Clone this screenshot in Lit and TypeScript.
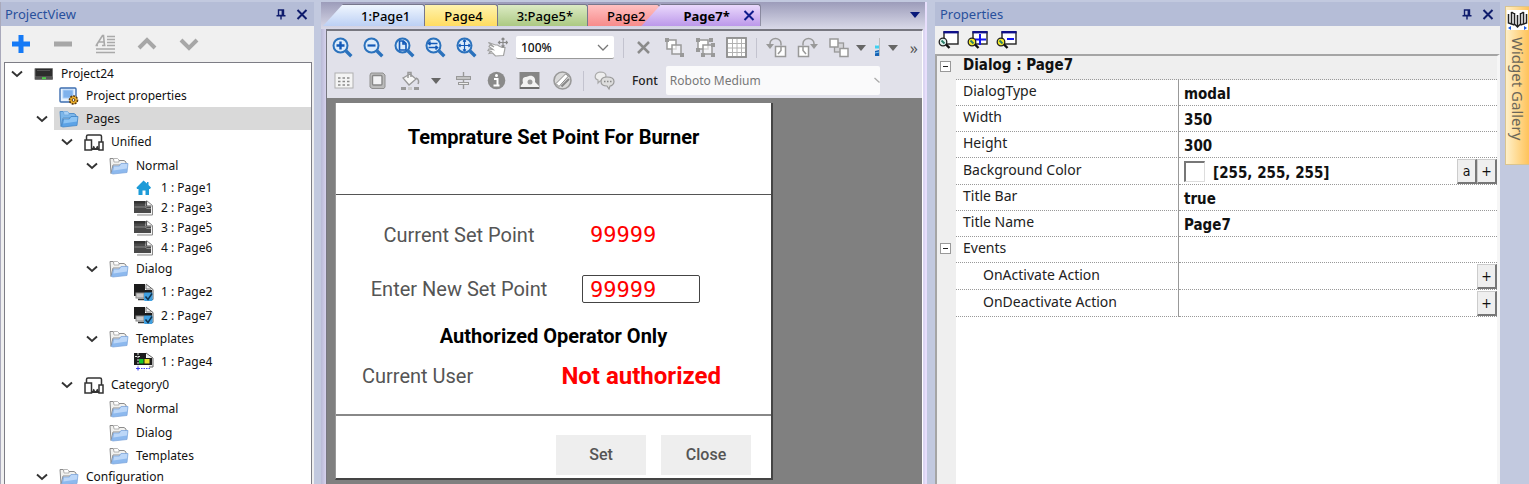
import { LitElement, html, css, svg, nothing, TemplateResult } from "lit";
import { customElement } from "lit/decorators.js";
import { classMap } from "lit/directives/class-map.js";

const icon = (w: number, h: number, body: unknown) =>
  html`<svg width=${w} height=${h} viewBox="0 0 ${w} ${h}" aria-hidden="true">${body}</svg>`;

const chevronDown = () =>
  icon(12, 8, svg`<path d="M1 1.500l5 4.500 5-4.500" fill="none" stroke="#333" stroke-width="1.900"/>`);

const triangle = (color: string) => icon(10, 6, svg`<path d="M0 0h10l-5 6z" fill=${color}/>`);

const pin = () =>
  icon(10, 11, svg`<path d="M2.500 1h5v5.500h-5zM6.300 1v5.500M0.500 6.800h9M5 7v3.500" fill="none" stroke="#0f1c6c" stroke-width="1.400"/>`);

const cross = (color: string) =>
  icon(12, 11, svg`<path d="M1.500 1l9 9M10.500 1l-9 9" fill="none" stroke=${color} stroke-width="2"/>`);

const deviceIcon = () => icon(20, 14, svg`
  <rect x="0.500" y="1" width="18.500" height="12" rx="1" fill="#777"/>
  <rect x="1.500" y="2" width="16.500" height="7.500" fill="#2d2d2d"/>
  <path d="M3 3.500h13" stroke="#555"/>
  <path d="M1 11h17.500" stroke="#555" stroke-width="2"/>
  <path d="M8 11.200h4" stroke="#4fd14a" stroke-width="2"/>`);

const propsIcon = () => icon(20, 18, svg`
  <rect x="1" y="1" width="16" height="14" rx="1" fill="#e8f3ff" stroke="#3d6eb0" stroke-width="1.400"/>
  <rect x="4" y="3" width="10" height="8" fill="#7fb2ec" stroke="#a9cdf6"/>
  <circle cx="14.500" cy="13" r="4" fill="#f5b62a" stroke="#5a3a10" stroke-width="1.600" stroke-dasharray="2 1"/>
  <circle cx="14.500" cy="13" r="1.400" fill="#fff" stroke="#5a3a10"/>`);

const folderIcon = (selected: boolean) => icon(20, 18, svg`
  <path d="M1 1.500h3l1 2h10l2 1.500v3H4l-2 8.500z" fill=${selected ? "#7db7ea" : "#f1f1ef"} stroke=${selected ? "#5592cc" : "#8c8c8c"}/>
  <path d="M4.500 1.500h4l1.500 1.500v2H5z" fill=${selected ? "#a8d0f5" : "#fff"} stroke=${selected ? "#6ba6dc" : "#999"} stroke-width="0.700"/>
  <path d="M4.500 9h5.500l2-2.500h7l-1 9-14 1.500-1.500-0.500z" fill=${selected ? "#5ca3e6" : "#8db9ee"} stroke=${selected ? "#3d82c4" : "#7ba3da"} stroke-width="0.700"/>
  <path d="M5 9.500h5.300l2-2.500h6l-0.400 4.500-13.500 2z" fill=${selected ? "#8cc4f4" : "#bcd7f8"}/>`);

const screensIcon = () => icon(20, 17, svg`
  <g fill="none" stroke="#333" stroke-width="1.500">
    <path d="M2.500 6V2.500a1.500 1.500 0 0 1 1.500-1.500h12a1.500 1.500 0 0 1 1.500 1.500V8"/>
    <rect x="1" y="6" width="6.500" height="10" fill="#fff"/>
    <rect x="15" y="8" width="4" height="8" fill="#fff"/>
    <path d="M8 15h7M9 12.500l1.500 1.500M14 12.500l-1.500 1.500" stroke-width="1.800"/>
  </g>`);

const homeIcon = () => icon(20, 16, svg`
  <path d="M9.500 0.500L13 3.500V2h1.500v3L17 7.500l-1 1.500h-1V15h-3.500v-4.500h-3V15H4.500V9H3L2.500 7.500z" fill="#1d9bd8"/>`);

const pageIcon = () => icon(20, 16, svg`
  <path d="M12.500 0.500l6 5v9.500H3" fill="#f4f4f4" stroke="#888"/>
  <path d="M0 1h11.500v5.500H17V13H0z" fill="#4a4a4a"/>
  <path d="M0 1h11.500v2.500H0z" fill="#333"/>
  <path d="M0.500 7h10.500l2 1.500h4" fill="none" stroke="#8a8a8a"/>
  <path d="M12.500 1v5h5" fill="none" stroke="#555" stroke-width="1.200"/>`);

const dialogIcon = () => icon(20, 19, svg`
  <path d="M12 1l7 5.500v10h-5" fill="#eee" stroke="#666"/>
  <path d="M0 1h11v6h7v6H0z" fill="#1c1c1c"/>
  <path d="M12 1.500v4.500h5" fill="none" stroke="#777"/>
  <rect x="2" y="10" width="8" height="5" fill="#c9c9c9" stroke="#888"/>
  <path d="M4 16.500h6" stroke="#333" stroke-width="1.500"/>
  <rect x="10" y="9.500" width="8.500" height="8.500" rx="1" fill="#3f9fe0"/>
  <path d="M11.500 13.500l2.500 3 4-6" fill="none" stroke="#10324d" stroke-width="1.500"/>`);

const templateIcon = () => icon(20, 19, svg`
  <path d="M12 1l7 5v9h-4" fill="#eee" stroke="#666"/>
  <path d="M0 1h12v5h6v7H0z" fill="#1c1c1c"/>
  <path d="M4 1v17M1 4.500h6" stroke="#ddd" stroke-dasharray="2 1"/>
  <rect x="5" y="7" width="4.500" height="4.500" fill="#12c428"/>
  <rect x="10.500" y="7" width="5" height="4.500" fill="#e8e02a"/>
  <path d="M2 16.500h15" stroke="#3c3cf0" stroke-width="1.200" stroke-dasharray="1.500 1"/>
  <path d="M2 16.500h4M4 14.500v4" stroke="#3c3cf0"/>`);

const zoomIcon = (inner: unknown) => icon(21, 21, svg`
  <circle cx="8.500" cy="8.500" r="7" fill="#dcebfa" stroke="#2b72bd" stroke-width="2"/>
  <path d="M13.800 13.800l5.500 5.500" stroke="#2b72bd" stroke-width="3.400"/>
  <g fill="none" stroke="#1259b8" stroke-width="1.600">${inner}</g>`);

const tools: Record<string, () => TemplateResult> = {
  "Zoom in": () => zoomIcon(svg`<path d="M4.500 8.500h8M8.500 4.500v8" stroke-width="2.400"/>`),
  "Zoom out": () => zoomIcon(svg`<path d="M4.500 8.500h8" stroke-width="2.200"/>`),
  "Zoom page": () => zoomIcon(svg`<path d="M5.500 4h4l2.500 2.500V13H5.500zM9 4v3h3"/>`),
  "Zoom width": () => zoomIcon(svg`<path d="M3.500 6.500h9M3.500 10.500h9M5.500 4.500l-2 2 2 1.500M10.500 9l2 1.500-2 2"/>`),
  "Zoom all": () => zoomIcon(svg`<path d="M3 8.500h11M8.500 3v11M7 4.500l1.500-1.500L10 4.500M7 12.500L8.500 14l1.500-1.500M4.500 7L3 8.500 4.500 10M12.500 7L14 8.500 12.500 10" stroke-width="1.200"/>`),
  Pan: () => icon(21, 21, svg`
    <path d="M1.500 5.500l7 2.500 2 0 1.500 1 3 1.500 3 0-0.500 3.500-1 4.500-8 0.500-3-3-3.500 0.500 1-1.500 2-0.500-4-1 1-1.500 4 0.500-4-3 1-1.500 4 2z" fill="#fff" stroke="#a2a2a2" stroke-width="1.200"/>
    <path d="M16 1v9M11.500 5.500h9M14.500 2.500L16 1l1.500 1.500M14.500 8.500L16 10l1.500-1.500M13 4l-1.500 1.500L13 7M19 4l1.500 1.500L19 7" fill="none" stroke="#888" stroke-width="1.200"/>`),
  Delete: () => icon(21, 21, svg`<path d="M5 5l11 11M16 5L5 16" stroke="#8b8b8b" stroke-width="2.500"/>`),
  Group: () => icon(21, 21, svg`
    <g fill="#fff" stroke="#999" stroke-width="1.500"><rect x="3" y="3" width="9" height="9"/><rect x="8" y="8" width="9" height="9" fill-opacity="0.600"/></g>
    <path d="M1 1h4v4H1zM16 16h4v4h-4z" fill="#999"/>`),
  Ungroup: () => icon(21, 21, svg`
    <g fill="#fff" stroke="#999" stroke-width="1.500"><rect x="3" y="3" width="10" height="9"/><rect x="8" y="8" width="9" height="9" fill-opacity="0.600"/></g>
    <path d="M1 1h4v4H1zM16 16h4v4h-4zM14 1h4v4h-4zM1 11h4v4H1zM6 16h4v4H6zM16 6h4v4h-4z" fill="#999"/>`),
  Grid: () => icon(21, 21, svg`
    <rect x="1" y="1" width="19" height="19" fill="#fff" stroke="#8c8c8c" stroke-width="1.800"/>
    <path d="M6.500 2v17M11 2v17M15.500 2v17M2 6.500h17M2 11h17M2 15.500h17" stroke="#b2b2b2"/>`),
  "Rotate left": () => icon(21, 21, svg`
    <rect x="9.500" y="9.500" width="10" height="10" fill="#fff" stroke="#999" stroke-width="1.500"/>
    <path d="M4 8V6.500a5.500 5 0 0 1 11 0v1.500M15 8.500v5l-3 3.500" fill="none" stroke="#999" stroke-width="1.500"/>
    <path d="M0 7h8l-4 5z" fill="#999"/>`),
  "Rotate right": () => icon(21, 21, svg`
    <rect x="1.500" y="9.500" width="10" height="10" fill="#fff" stroke="#999" stroke-width="1.500"/>
    <path d="M17 8V6.500a5.500 5 0 0 0-11 0v1.500M6 8.500v5l3 3.500" fill="none" stroke="#999" stroke-width="1.500"/>
    <path d="M13 7h8l-4 5z" fill="#999"/>`),
  Order: () => icon(21, 21, svg`
    <rect x="6.500" y="6" width="9" height="9" fill="#d4d4d8" stroke="#999" stroke-width="1.300"/>
    <g fill="#fff" stroke="#999" stroke-width="1.500"><rect x="2" y="2" width="8" height="8"/><rect x="12" y="11.500" width="8" height="8"/></g>`),
  Keypad: () => icon(21, 21, svg`
    <rect x="1" y="3" width="18" height="15" fill="#f4f4f4" stroke="#b0b0b0"/>
    <path d="M4 8h12M4 11.500h12M4 15h12" stroke="#8a8a8a" stroke-width="1.600" stroke-dasharray="2.500 2"/>`),
  Frame: () => icon(21, 21, svg`
    <path d="M4 3h12l2 2v12l-1 1.500H5L3 17V5z" fill="#bbb" stroke="#909090"/>
    <rect x="5.500" y="5.500" width="9.500" height="9.500" rx="1" fill="#f2f2f4" stroke="#888" stroke-width="1.400"/>`),
  Fill: () => icon(21, 21, svg`
    <path d="M3 8l7-4 6 5-7 6z" fill="#f6f6f6" stroke="#999" stroke-width="1.300"/>
    <path d="M8 8V2.500h3V7M16 8c3 1 3 4 2 6" fill="none" stroke="#999" stroke-width="1.500"/>
    <path d="M1 17h5v3H1zM14 17h5v3h-5z" fill="#999"/><path d="M8 17h4v3H8z" fill="#ccc"/>`),
  Align: () => icon(21, 21, svg`
    <path d="M10.500 2v17" stroke="#999" stroke-width="1.400"/>
    <path d="M3 6h15v4H3zM5 12h11v3H5z" fill="#999"/><path d="M4 8h13M6 13.500h9" stroke="#eee"/>`),
  Info: () => icon(21, 21, svg`
    <circle cx="10.500" cy="10.500" r="8.800" fill="#8a8a8a"/>
    <path d="M8 9h3.500v6M7.500 15.500h6" fill="none" stroke="#fff" stroke-width="2"/><circle cx="10.500" cy="5.500" r="1.500" fill="#fff"/>`),
  Image: () => icon(21, 21, svg`
    <rect x="0.500" y="2" width="20" height="17" fill="#858585"/>
    <path d="M1.500 16L4 13c-1-4 0-6 3-6l3-1c4-1 7 2 6 6l4 4v1H2z" fill="#f2f2f2"/>
    <circle cx="11" cy="12" r="2.500" fill="#999"/><path d="M1 18h19" stroke="#666" stroke-width="1.500"/>`),
  Disable: () => icon(21, 21, svg`
    <circle cx="10.500" cy="10.500" r="8.500" fill="#d9d9d9" stroke="#999" stroke-width="1.600"/>
    <path d="M4 13.500L13.500 4l3 2L7 16.500z" fill="#fff" stroke="#888"/><path d="M9.500 16.500L17 9" stroke="#888" stroke-width="2"/>`),
  Comments: () => icon(21, 21, svg`
    <path d="M6 2c4 0 6 2 6 4s-3 5-6 5l-2 2v-3C0 9 0 3 6 2z" fill="#eee" stroke="#aaa" stroke-width="1.200"/>
    <path d="M13 7c5 0 7 2 7 4.500S18 16 16 16l-1 3-2-3c-4 0-6-2-6-4.500S9 7 13 7z" fill="#ddd" stroke="#999" stroke-width="1.200"/>
    <path d="M10 11.500h8" stroke="#888" stroke-width="1.500" stroke-dasharray="1.500 1.500"/>`),
};

const listTools: [string, () => TemplateResult][] = [
  ["Add", () => icon(20, 20, svg`<path d="M10 1v18M1 10h18" stroke="#157af6" stroke-width="5"/>`)],
  ["Remove", () => icon(20, 20, svg`<path d="M1 10h18" stroke="#a7a7a7" stroke-width="5"/>`)],
  ["Rename", () => icon(20, 20, svg`
    <path d="M0.500 11.500h2.500M1.500 11L7.500 1.500h1l1 10M7 11.500h3.500M4 8h5" fill="none" stroke="#a9a9a9" stroke-width="1.600"/>
    <path d="M12 2.500h8M12 5.500h8M12 8.500h8M12 11.500h8M1 15h19M1 18.500h19" stroke="#a9a9a9" stroke-width="1.500"/>`)],
  ["Move up", () => icon(20, 20, svg`<path d="M2 14l8-8 8 8" fill="none" stroke="#a7a7a7" stroke-width="4"/>`)],
  ["Move down", () => icon(20, 20, svg`<path d="M2 6l8 8 8-8" fill="none" stroke="#a7a7a7" stroke-width="4"/>`)],
];

const propertyTools: [string, string, unknown][] = [
  ["Show all", "#dff3ee", nothing],
  ["Expand", "#f4ea2a", svg`<path d="M8 8.500h11M13 3v11" stroke="#1414f0" stroke-width="2"/>`],
  ["Collapse", "#f4ea2a", svg`<path d="M11 8h7" stroke="#1414f0" stroke-width="2"/>`],
];

type Kind = "device" | "props" | "folder" | "screens" | "home" | "page" | "dialog" | "template";
interface Node {
  level: number;
  kind: Kind;
  text: string;
  size: "short" | "small" | "medium" | "tall";
  open?: boolean;
  selected?: boolean;
}

const nodes: Node[] = [
  { level: 0, kind: "device", text: "Project24", size: "small", open: true },
  { level: 1, kind: "props", text: "Project properties", size: "small" },
  { level: 1, kind: "folder", text: "Pages", size: "medium", open: true, selected: true },
  { level: 2, kind: "screens", text: "Unified", size: "tall", open: true },
  { level: 3, kind: "folder", text: "Normal", size: "tall", open: true },
  { level: 4, kind: "home", text: "1 : Page1", size: "short" },
  { level: 4, kind: "page", text: "2 : Page3", size: "short" },
  { level: 4, kind: "page", text: "3 : Page5", size: "short" },
  { level: 4, kind: "page", text: "4 : Page6", size: "short" },
  { level: 3, kind: "folder", text: "Dialog", size: "small", open: true },
  { level: 4, kind: "dialog", text: "1 : Page2", size: "tall" },
  { level: 4, kind: "dialog", text: "2 : Page7", size: "medium" },
  { level: 3, kind: "folder", text: "Templates", size: "medium", open: true },
  { level: 4, kind: "template", text: "1 : Page4", size: "medium" },
  { level: 2, kind: "screens", text: "Category0", size: "tall", open: true },
  { level: 3, kind: "folder", text: "Normal", size: "tall" },
  { level: 3, kind: "folder", text: "Dialog", size: "medium" },
  { level: 3, kind: "folder", text: "Templates", size: "medium" },
  { level: 1, kind: "folder", text: "Configuration", size: "short", open: true },
];

const nodeIcon = (n: Node) => {
  switch (n.kind) {
    case "device": return deviceIcon();
    case "props": return propsIcon();
    case "folder": return folderIcon(!!n.selected);
    case "screens": return screensIcon();
    case "home": return homeIcon();
    case "page": return pageIcon();
    case "dialog": return dialogIcon();
    case "template": return templateIcon();
  }
};

const base = css`
  :host { box-sizing: border-box; font-family: "Noto Sans", "Open Sans", sans-serif; }
  *, *::before, *::after { box-sizing: border-box; }
  button { border: 0; padding: 0; margin: 0; background: none; font: inherit; color: inherit; display: flex; align-items: center; justify-content: center; }
  svg { display: block; flex: none; }
  .caption { display: flex; align-items: center; height: 24px; margin: 0; background: #b5bdd7; color: #28509c; font-size: 13px; font-weight: 400; flex: none; }
  .caption .name { flex: 1; font: inherit; margin: 0; line-height: 20px; }
  .caption .actions { display: flex; gap: 10px; align-items: center; }
`;

@customElement("project-view")
class ProjectView extends LitElement {
  static styles = [base, css`
    :host { display: flex; flex-direction: column; min-width: 0; min-height: 0; background: #f0f0f0; border-left: 1px solid #a9a9bb; }
    .caption { padding: 0 6px 0 4px; }
    .tools { display: flex; align-items: center; gap: 22px; height: 36px; padding: 0 0 0 10px; flex: none; }
    .tree { flex: 1; min-height: 0; overflow: hidden; margin: 0 2px 0 3px; padding: 0; background: #fff; border: 1px solid #7d7d85; border-bottom: 0; list-style: none; font-size: 12px; line-height: 14px; color: #111; }
    .node { display: flex; }
    .short { height: 20px; } .small { height: 22px; } .medium { height: 23px; } .tall { height: 24px; }
    .indent { flex: none; width: calc(25px * var(--level)); }
    .toggle { flex: none; width: 24px; }
    .label { flex: 1; display: flex; align-items: center; gap: 7px; padding-left: 5px; white-space: nowrap; }
    .node.selected .label { background: #d9d9d9; }
  `];
  render() {
    return html`
      <header class="caption"><h2 class="name">ProjectView</h2>
        <div class="actions"><button aria-label="Pin">${pin()}</button><button aria-label="Close">${cross("#0f1c6c")}</button></div>
      </header>
      <div class="tools">${listTools.map(([n, i]) => html`<button aria-label=${n}>${i()}</button>`)}</div>
      <ul class="tree" role="tree" aria-label="Project">
        ${nodes.map((n) => html`
          <li role="treeitem" aria-level=${n.level + 1} aria-selected=${!!n.selected}
              class=${classMap({ node: true, [n.size]: true, selected: !!n.selected })}>
            <span class="indent" style="--level:${n.level}"></span>
            ${n.open ? html`<button class="toggle" aria-label="Collapse ${n.text}">${chevronDown()}</button>` : html`<span class="toggle"></span>`}
            <span class="label">${nodeIcon(n)}<span>${n.text}</span></span>
          </li>`)}
      </ul>`;
  }
}

@customElement("page-editor")
class PageEditor extends LitElement {
  static styles = [base, css`
    :host { display: flex; flex-direction: column; min-width: 0; min-height: 0; background: linear-gradient(to right, #b9bad6, #dcd6f2 6px, #dcd6f2); border-right: 2px solid #e8defc; }
    .tabbar { display: flex; align-items: flex-end; height: 27px; padding: 0 5px 3px 2px; background: linear-gradient(#9c9cba, #d9d9e8); flex: none; }
    .tab { position: relative; display: flex; align-items: center; height: 22px; padding: 0 14px 0 19px; font-size: 13px; font-weight: 500; line-height: 20px; color: #000; white-space: nowrap; border: 1px solid #77778c; border-bottom: 0; border-left: 0; border-radius: 0 3px 0 0; }
    .blue { background: linear-gradient(#f0f6ff, #bcd0f4); }
    .yellow { background: linear-gradient(#fff3ae, #ffdc61); }
    .green { background: linear-gradient(#dcebc4, #acc983); }
    .red { background: linear-gradient(#ffc1c1, #f78b8b); }
    .slant { clip-path: polygon(0 100%, 20px 0, 100% 0, 100% 100%); padding-left: 38px; }
    .active { background: linear-gradient(#ead9fc, #bc98ea); font-weight: 700; gap: 13px; margin-left: -19px; padding: 0 5px 0 42px; }
    .fill { flex: 1; }
    .list { height: 22px; }
    .frame { flex: 1; min-height: 0; display: flex; flex-direction: column; margin: 0 2px 0 5px; border-top: 2px solid #777780; border-left: 1px solid #777780; border-right: 1px solid #fff; }
    .bars { background: #e1e1ea; flex: none; padding: 0 0 1px; }
    .bar { display: flex; align-items: center; height: 33px; }
    .bar.first { padding: 0 4px 0 5px; }
    .bar.second { padding: 0 42px 0 7px; }
    .zooms { display: flex; gap: 10px; }
    .group { display: flex; align-items: center; gap: 11px; }
    .first .group { gap: 10px; }
    .spread { gap: 12px; }
    .sep { width: 1px; height: 20px; background: #c3c3cf; margin: 0 9px; flex: none; }
    .second .sep { margin: 0 10px; }
    .select { appearance: none; -webkit-appearance: none; border: 0; border-bottom: 1px solid #999; border-radius: 2px; background: #fff; margin: 0 0 0 8px; padding: 0 5px; width: 98px; height: 23px; font: 500 12px "Noto Sans", sans-serif; color: #111; }
    .combo { display: grid; align-items: center; }
    .combo > * { grid-area: 1 / 1; }
    .combo svg { justify-self: end; margin-right: 5px; pointer-events: none; }
    .font { flex: 1; min-width: 0; margin-left: 8px; }
    .font svg { margin-right: 0; }
    .fontname { width: 100%; min-width: 0; height: 29px; border: 0; padding: 0 4px; border-radius: 2px; background: #fafafb; font: 12px "Noto Sans", sans-serif; color: #777; }
    .fontlabel { font-size: 12px; font-weight: 500; color: #222; margin-left: 17px; }
    .drop { margin: 0 8px 0 7px; }
    .second .drop { margin: 0 12px 0 10px; }
    .more { font-size: 16px; line-height: 20px; color: #555; margin-left: auto; }
    .canvas { flex: 1; min-height: 0; overflow: hidden; background: #808080; padding: 5px 0 0 8px; }
    .page { width: 438px; background: #fff; border: 1px solid #444; border-width: 0 2px 2px 1px; border-left-color: #999; font-family: Roboto, sans-serif; font-size: 20px; line-height: 24px; color: #555; }
    .top { height: 92px; padding-top: 22px; border-bottom: 1px solid #555; }
    .title { margin: 0; font-size: 20px; font-weight: 700; color: #000; text-align: center; }
    .fields { padding-top: 13px; }
    .field { display: grid; grid-template-columns: 246px 118px; align-items: center; text-align: center; height: 54px; }
    .value { height: 28px; width: 118px; border: 1px solid transparent; padding: 0 7px; text-align: left; background: #fff; font-family: "DejaVu Sans Mono", monospace; font-size: 22px; line-height: 26px; color: #f00; }
    .boxed { border-color: #444; border-radius: 2px; }
    .subtitle { margin: 0; height: 40px; line-height: 40px; font-size: 20px; color: #000; text-align: center; }
    .user { display: flex; align-items: center; justify-content: space-between; height: 60px; padding: 0 50px 18px 26px; border-bottom: 2px solid #888; }
    .status { color: #f00; font-size: 24px; font-weight: 700; }
    .foot { display: flex; justify-content: flex-end; gap: 15px; padding: 19px 20px 3px; }
    .foot .push { width: 90px; height: 40px; background: #eee; font-size: 16px; font-weight: 500; color: #555; }
  `];
  tool(name: string) {
    return html`<button aria-label=${name}>${tools[name]()}</button>`;
  }
  render() {
    return html`
      <nav class="tabbar">
        <button class="tab blue slant">1:Page1</button>
        <button class="tab yellow">Page4</button>
        <button class="tab green">3:Page5*</button>
        <button class="tab red">Page2</button>
        <div class="tab slant active"><button>Page7*</button><button aria-label="Close tab">${cross("#0f1c8c")}</button></div>
        <span class="fill"></span>
        <button class="list" aria-label="Open pages">${triangle("#0a1a7a")}</button>
      </nav>
      <div class="frame">
        <div class="bars">
          <div class="bar first">
            <div class="zooms">${["Zoom in", "Zoom out", "Zoom page", "Zoom width", "Zoom all", "Pan"].map((n) => this.tool(n))}</div>
            <div class="combo">
              <select class="select" aria-label="Zoom level"><option>100%</option></select>
              ${icon(12, 8, svg`<path d="M1 1l5 5 5-5" fill="none" stroke="#777" stroke-width="1.300"/>`)}
            </div>
            <span class="sep"></span>
            <div class="group">${["Delete", "Group", "Ungroup", "Grid"].map((n) => this.tool(n))}</div>
            <span class="sep"></span>
            <div class="group">${["Rotate left", "Rotate right", "Order"].map((n) => this.tool(n))}</div>
            <button class="drop" aria-label="Order options">${triangle("#666")}</button>
            <button aria-label="Align">${icon(7, 21, svg`<path d="M5.500 1v18" stroke="#bbb"/><path d="M1 9.500l3-3v3z" fill="#e8f4fb"/><path d="M1 8.500h4v3H1z" fill="#3fd0f0"/><path d="M1 14l4-1v6H1z" fill="#1763b5"/><path d="M1 16l4-1" stroke="#7fc4ee"/>`)}</button>
            <button class="drop" aria-label="Align options">${triangle("#666")}</button>
            <button class="more" aria-label="More tools">»</button>
          </div>
          <div class="bar second">
            <div class="group spread">${["Keypad", "Frame", "Fill"].map((n) => this.tool(n))}</div>
            <button class="drop" aria-label="Fill options">${triangle("#666")}</button>
            <div class="group spread">${["Align", "Info", "Image", "Disable"].map((n) => this.tool(n))}</div>
            <span class="sep"></span>
            ${this.tool("Comments")}
            <label class="fontlabel" for="font">Font</label>
            <div class="combo font">
              <input class="fontname" id="font" value="Roboto Medium" />
              ${icon(6, 7, svg`<path d="M0.500 1l5 4.500" stroke="#aaa" stroke-width="1.300"/>`)}
            </div>
          </div>
        </div>
        <div class="canvas">
          <section class="page">
            <div class="top"><h1 class="title">Temprature Set Point For Burner</h1></div>
            <div class="fields">
              <div class="field"><span>Current Set Point</span><output class="value">99999</output></div>
              <div class="field"><label for="sp">Enter New Set Point</label><input id="sp" class="value boxed" value="99999" /></div>
            </div>
            <h2 class="subtitle">Authorized Operator Only</h2>
            <div class="user"><span>Current User</span><span class="status">Not authorized</span></div>
            <div class="foot"><button class="push">Set</button><button class="push">Close</button></div>
          </section>
        </div>
      </div>`;
  }
}

@customElement("property-grid")
class PropertyGrid extends LitElement {
  static styles = [base, css`
    :host { display: flex; flex-direction: column; min-width: 0; min-height: 0; background: #f0f0f0; }
    .caption { padding: 0 6px 0 5px; }
    .tools { display: flex; gap: 8px; align-items: center; height: 28px; padding-left: 3px; flex: none; }
    .body { flex: 1; min-height: 0; overflow: hidden; border-top: 2px solid #a5a5a5; border-left: 2px solid #a5a5a5; border-right: 3px solid #f6f6f6; background: linear-gradient(to right, #efefef 19px, #fff 19px); }
    .grid { width: 100%; border-collapse: separate; border-spacing: 0; table-layout: fixed; font-size: 14px; line-height: 20px; color: #222; }
    .c0 { width: 19px; } .c1 { width: 223px; }
    th, td { height: 26px; padding: 0; text-align: left; font-weight: 400; white-space: nowrap; }
    .action th, .action td { height: 27px; }
    .head th, .head td { height: 24px; background: #efefef; }
    .head .key { font: 700 15px/18px "DejaVu Sans Condensed", "DejaVu Sans", sans-serif; padding-bottom: 5px; border-right: 0; color: #111; }
    .line { border-bottom: 1px dotted #999; }
    .key { padding: 0 0 3px 7px; border-right: 1px solid #999; }
    .inner { padding-left: 27px; }
    .val { padding: 0 0 0 5px; font: 700 15px/20px "DejaVu Sans Condensed", "DejaVu Sans", sans-serif; color: #111; }
    .cell { display: flex; align-items: center; height: 25px; }
    .text { flex: 1; padding-top: 3px; }
    .swatch { width: 21px; height: 21px; margin-right: 8px; border: 1px solid #ddd; border-top: 2px solid #777; border-left: 2px solid #777; background: #fff; }
    .btn { width: 20px; height: 25px; background: #efefef; border: 1px solid #ccc; border-right: 2px solid #777; border-bottom: 2px solid #777; font-size: 14px; font-weight: 400; line-height: 16px; }
    .fold { width: 11px; height: 11px; margin-left: 3px; margin-bottom: 4px; background: #fff; border: 1px solid #999; }
  `];
  fold(name: string) {
    return html`<button class="fold" aria-label="Collapse ${name}">${icon(7, 7, svg`<path d="M1 3.500h5" stroke="#222"/>`)}</button>`;
  }
  row(key: string, value: unknown, opts: { inner?: boolean; action?: boolean; fold?: boolean } = {}) {
    return html`<tr class=${classMap({ action: !!opts.action })}>
      <td>${opts.fold ? this.fold(key) : nothing}</td>
      <th scope="row" class=${classMap({ key: true, line: true, inner: !!opts.inner })}>${key}</th>
      <td class="val line"><div class="cell">${value}</div></td></tr>`;
  }
  render() {
    const text = (s: string) => html`<span class="text">${s}</span>`;
    const plus = html`<button class="btn" aria-label="Edit">+</button>`;
    return html`
      <header class="caption"><h2 class="name">Properties</h2>
        <div class="actions"><button aria-label="Pin">${pin()}</button><button aria-label="Close">${cross("#0f1c6c")}</button></div>
      </header>
      <div class="tools">${propertyTools.map(([n, lens, mark]) => html`<button aria-label=${n}>${icon(21, 19, svg`
        <rect x="6" y="1" width="14" height="12" fill="#fff" stroke="#222" stroke-width="1.400"/>
        <path d="M5.500 1.200h15" stroke="#10108a" stroke-width="2.400"/>${mark}
        <circle cx="5" cy="11" r="3.800" fill=${lens} stroke="#222" stroke-width="1.300"/>
        <path d="M3.500 9.500l3 3" stroke="#2c7d68" stroke-width="2"/><path d="M8 13.500l3.500 3.500" stroke="#111" stroke-width="2.400"/>`)}</button>`)}</div>
      <div class="body">
        <table class="grid">
          <colgroup><col class="c0" /><col class="c1" /><col /></colgroup>
          <tr class="head"><td>${this.fold("Dialog")}</td><th class="key line" colspan="2">Dialog : Page7</th></tr>
          ${this.row("DialogType", text("modal"))}
          ${this.row("Width", text("350"))}
          ${this.row("Height", text("300"))}
          ${this.row("Background Color", html`<span class="swatch"></span>${text("[255, 255, 255]")}<button class="btn" aria-label="Attach tag">a</button>${plus}`, { action: true })}
          ${this.row("Title Bar", text("true"))}
          ${this.row("Title Name", text("Page7"))}
          ${this.row("Events", nothing, { fold: true })}
          ${this.row("OnActivate Action", html`${text("")}${plus}`, { inner: true, action: true })}
          ${this.row("OnDeactivate Action", html`${text("")}${plus}`, { inner: true, action: true })}
        </table>
      </div>`;
  }
}

@customElement("app-root")
class AppRoot extends LitElement {
  static styles = [base, css`
    :host { display: grid; grid-template-columns: 314px minmax(0, 613fr) minmax(0, 578fr) 24px; height: 100vh; padding-top: 2px; overflow: hidden; background: #c2c9df; border-top: 0; }
    project-view, property-grid { height: calc(100vh - 2px); }
    page-editor { margin: 0 0 0 7px; height: calc(100vh - 2px); }
    property-grid { margin: 0 5px 0 8px; }
    .gallery { display: flex; flex-direction: column; align-items: center; justify-content: flex-start; gap: 7px; width: 24px; height: 159px; margin-top: 4px; padding-top: 3px; background: linear-gradient(to right, #fff0c8, #ffc35a); border: 1px solid #d9c490; border-right: 0; color: #6c6759; font-size: 15px; line-height: 20px; }
    .side { writing-mode: vertical-rl; white-space: nowrap; }
  `];
  render() {
    return html`
      <project-view></project-view>
      <page-editor></page-editor>
      <property-grid></property-grid>
      <button class="gallery">
        ${icon(21, 20, svg`<rect width="21" height="20" fill="#fff"/>
          <path d="M10.500 5v12M7.500 3v11l3 3 3-3V3M4.500 2v12l3 1M16.500 2v12l-3 1M1.500 4v9l3 1M19.500 4v9l-3 1M4.500 2l3 2M16.500 2l-3 2" fill="none" stroke="#222" stroke-width="1.500"/>
          <path d="M4 16v4l-3-2zM17 16v4l3-2z" fill="#1a5be0"/>`)}
        <span class="side">Widget Gallery</span>
      </button>`;
  }
}
